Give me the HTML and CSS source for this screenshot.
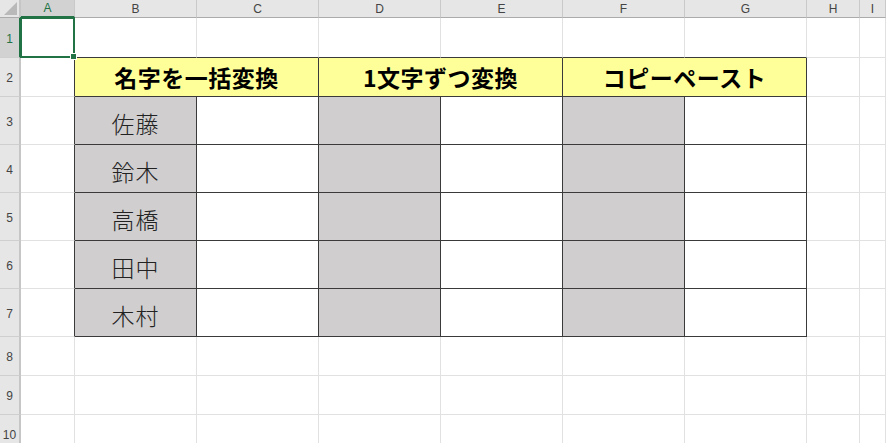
FILE: index.html
```html
<!DOCTYPE html>
<html lang="ja">
<head>
    <meta charset="UTF-8">
    <meta name="viewport" content="width=device-width, initial-scale=1.0">
    <title>名字の変換</title>
    <link rel="stylesheet" href="styles.css">
</head>
<body>
    <div class="sheet">
        <!-- column headers -->
        <div class="hd corner"><span class="tri"></span></div>
        <div class="hd col sel">A</div>
        <div class="hd col">B</div>
        <div class="hd col">C</div>
        <div class="hd col">D</div>
        <div class="hd col">E</div>
        <div class="hd col">F</div>
        <div class="hd col">G</div>
        <div class="hd col">H</div>
        <div class="hd col">I</div>

        <!-- row 1 -->
        <div class="hd row sel">1</div>
        <div class="c active"><div class="cursor"><span class="handle"></span></div></div>
        <div class="c edge-b"></div>
        <div class="c edge-b"></div>
        <div class="c edge-b"></div>
        <div class="c edge-b"></div>
        <div class="c edge-b"></div>
        <div class="c edge-b"></div>
        <div class="c"></div>
        <div class="c"></div>

        <!-- row 2 -->
        <div class="hd row">2</div>
        <div class="c edge-r"></div>
        <div class="c title span2">名字を一括変換</div>
        <div class="c title span2">1文字ずつ変換</div>
        <div class="c title span2">コピーペースト</div>
        <div class="c"></div>
        <div class="c"></div>

        <!-- row 3 -->
        <div class="hd row">3</div>
        <div class="c edge-r"></div>
        <div class="c t gray name">佐藤</div>
        <div class="c t"></div>
        <div class="c t gray"></div>
        <div class="c t"></div>
        <div class="c t gray"></div>
        <div class="c t"></div>
        <div class="c"></div>
        <div class="c"></div>

        <!-- row 4 -->
        <div class="hd row">4</div>
        <div class="c edge-r"></div>
        <div class="c t gray name">鈴木</div>
        <div class="c t"></div>
        <div class="c t gray"></div>
        <div class="c t"></div>
        <div class="c t gray"></div>
        <div class="c t"></div>
        <div class="c"></div>
        <div class="c"></div>

        <!-- row 5 -->
        <div class="hd row">5</div>
        <div class="c edge-r"></div>
        <div class="c t gray name">高橋</div>
        <div class="c t"></div>
        <div class="c t gray"></div>
        <div class="c t"></div>
        <div class="c t gray"></div>
        <div class="c t"></div>
        <div class="c"></div>
        <div class="c"></div>

        <!-- row 6 -->
        <div class="hd row">6</div>
        <div class="c edge-r"></div>
        <div class="c t gray name">田中</div>
        <div class="c t"></div>
        <div class="c t gray"></div>
        <div class="c t"></div>
        <div class="c t gray"></div>
        <div class="c t"></div>
        <div class="c"></div>
        <div class="c"></div>

        <!-- row 7 -->
        <div class="hd row">7</div>
        <div class="c edge-r"></div>
        <div class="c t gray name">木村</div>
        <div class="c t"></div>
        <div class="c t gray"></div>
        <div class="c t"></div>
        <div class="c t gray"></div>
        <div class="c t"></div>
        <div class="c"></div>
        <div class="c"></div>

        <!-- rows 8-10 -->
        <div class="hd row">8</div>
        <div class="c"></div><div class="c"></div><div class="c"></div><div class="c"></div><div class="c"></div><div class="c"></div><div class="c"></div><div class="c"></div><div class="c"></div>
        <div class="hd row">9</div>
        <div class="c"></div><div class="c"></div><div class="c"></div><div class="c"></div><div class="c"></div><div class="c"></div><div class="c"></div><div class="c"></div><div class="c"></div>
        <div class="hd row">10</div>
        <div class="c"></div><div class="c"></div><div class="c"></div><div class="c"></div><div class="c"></div><div class="c"></div><div class="c"></div><div class="c"></div><div class="c"></div>
    </div>
</body>
</html>
```

FILE: styles.css
```css
html, body { margin: 0; padding: 0; background: #fff; overflow: hidden; }
body { font-family: "Noto Sans CJK JP", "Noto Sans", sans-serif; }

.sheet {
    display: grid;
    grid-template-columns: 21px 54px repeat(6, 122px) 53px 1fr;
    grid-template-rows: 18px 40px 39px repeat(5, 48px) 39px 39px 39px;
    width: 886px;
    height: 443px;
}

.c {
    box-sizing: border-box;
    border-right: 1px solid #e1e1e1;
    border-bottom: 1px solid #e1e1e1;
    position: relative;
}

/* headers */
.hd {
    box-sizing: border-box;
    background: #e6e6e6;
    color: #444;
    font-family: "Liberation Sans", Arial, sans-serif;
    font-size: 12px;
    display: flex;
    align-items: center;
    justify-content: center;
}
.col { border-right: 1px solid #c9c9c9; border-bottom: 1px solid #ababab; }
.row { border-right: 2px solid #c6c6c6; border-bottom: 1px solid #cfcfcf; padding-top: 2px; }
.corner { border-right: 2px solid #c6c6c6; border-bottom: 1px solid #ababab; position: relative; }
.tri {
    position: absolute;
    right: 2px;
    bottom: 2px;
    width: 0;
    height: 0;
    border-left: 13px solid transparent;
    border-bottom: 13px solid #b9b9b9;
}
.hd.sel { background: #d2d2d2; color: #217346; }
.col.sel { border-bottom: 2px solid #217346; }
.row.sel { border-right: 2px solid #217346; }

/* active cell */
.cursor {
    position: absolute;
    left: -1px;
    top: -1px;
    right: -1px;
    bottom: -1px;
    border: 2px solid #217346;
    z-index: 2;
}
.handle {
    position: absolute;
    right: -4px;
    bottom: -4px;
    width: 5px;
    height: 5px;
    background: #217346;
    border: 1px solid #fff;
}

/* table */
.edge-b { border-bottom-color: #3a3a3a; }
.edge-r { border-right-color: #3a3a3a; }
.t { border-right-color: #3a3a3a; border-bottom-color: #3a3a3a; }
.gray { background: #d0cece; }
.title {
    grid-column: span 2;
    background: #ffff99;
    border-right-color: #3a3a3a;
    border-bottom-color: #3a3a3a;
    font-weight: bold;
    font-size: 23px;
    color: #000;
    display: flex;
    align-items: center;
    justify-content: center;
    letter-spacing: 0.5px;
}
.name {
    display: flex;
    align-items: center;
    justify-content: center;
    font-size: 23px;
    color: #222;
    font-weight: 300;
    padding-top: 4px;
    letter-spacing: 1px;
}
```
